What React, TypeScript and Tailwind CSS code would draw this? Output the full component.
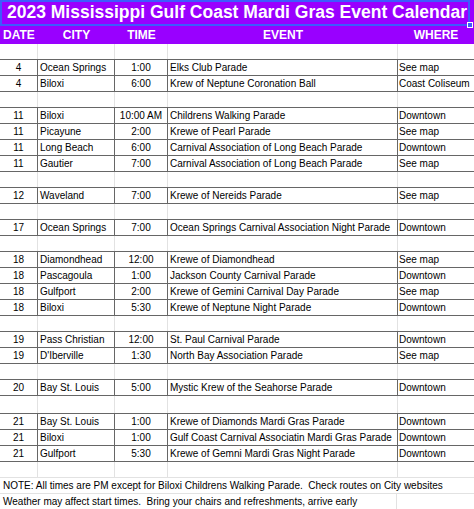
import React from "react"

type Row = [string, string, string, string, string]

const groups: Row[][] = [
  [
    ["4", "Ocean Springs", "1:00", "Elks Club Parade", "See map"],
    ["4", "Biloxi", "6:00", "Krew of Neptune Coronation Ball", "Coast Coliseum"],
  ],
  [
    ["11", "Biloxi", "10:00 AM", "Childrens Walking Parade", "Downtown"],
    ["11", "Picayune", "2:00", "Krewe of Pearl Parade", "See map"],
    ["11", "Long Beach", "6:00", "Carnival Association of Long Beach Parade", "Downtown"],
    ["11", "Gautier", "7:00", "Carnival Association of Long Beach Parade", "See map"],
  ],
  [["12", "Waveland", "7:00", "Krewe of Nereids Parade", "See map"]],
  [["17", "Ocean Springs", "7:00", "Ocean Springs Carnival Association Night Parade", "Downtown"]],
  [
    ["18", "Diamondhead", "12:00", "Krewe of Diamondhead", "See map"],
    ["18", "Pascagoula", "1:00", "Jackson County Carnival Parade", "Downtown"],
    ["18", "Gulfport", "2:00", "Krewe of Gemini Carnival Day Parade", "See map"],
    ["18", "Biloxi", "5:30", "Krewe of Neptune Night Parade", "Downtown"],
  ],
  [
    ["19", "Pass Christian", "12:00", "St. Paul Carnival Parade", "Downtown"],
    ["19", "D'Iberville", "1:30", "North Bay Association Parade", "See map"],
  ],
  [["20", "Bay St. Louis", "5:00", "Mystic Krew of the Seahorse Parade", "Downtown"]],
  [
    ["21", "Bay St. Louis", "1:00", "Krewe of Diamonds Mardi Gras Parade", "Downtown"],
    ["21", "Biloxi", "1:00", "Gulf Coast Carnival Associatin Mardi Gras Parade", "Downtown"],
    ["21", "Gulfport", "5:30", "Krewe of Gemni Mardi Gras Night Parade", "Downtown"],
  ],
]

const cols = "grid grid-cols-[38px_77px_53px_230px_1fr]"

function BlankRow({ tall = false, darkBottom = true }: { tall?: boolean; darkBottom?: boolean }) {
  return (
    <div
      className={`${cols} ${tall ? "h-[18px]" : "h-[16px]"} border-b ${
        darkBottom ? "border-[#666]" : "border-[#e2e2e2]"
      }`}
    >
      <div className="border-r border-[#e2e2e2]" />
      <div className="border-r border-[#e2e2e2]" />
      <div className="border-r border-[#e2e2e2]" />
      <div className="border-r border-[#e2e2e2]" />
      <div />
    </div>
  )
}

function DataRow({ row }: { row: Row }) {
  const [date, city, time, event, where] = row
  return (
    <div className={`${cols} h-[16px] border-b border-[#666] text-[10px] leading-none text-black`}>
      <div className="flex items-center justify-center border-r border-[#666]">{date}</div>
      <div className="flex items-center border-r border-[#666] pl-[2px] whitespace-nowrap">{city}</div>
      <div className="flex items-center justify-center border-r border-[#666] whitespace-nowrap">{time}</div>
      <div className="flex items-center border-r border-[#666] pl-[2px] whitespace-nowrap overflow-hidden">
        {event}
      </div>
      <div className="flex items-center pl-[1px] whitespace-nowrap">{where}</div>
    </div>
  )
}

export default function App() {
  return (
    <div className="w-[474px] h-[509px] overflow-hidden bg-white font-['Liberation_Sans',Arial,sans-serif]">
      {/* title cell with spreadsheet selection outline */}
      <div className="relative h-[26px] bg-[#9900ff] flex items-center justify-center">
        <span className="text-white font-bold text-[17.5px] leading-none whitespace-nowrap tracking-[0px]">
          2023 Mississippi Gulf Coast Mardi Gras Event Calendar
        </span>
        <div className="absolute left-0 top-0 w-[470px] h-[26px] border-2 border-[#3d5afe] pointer-events-none" />
        <div className="absolute left-[467px] top-[22px] w-[6px] h-[6px] bg-[#3d5afe] border border-white" />
      </div>

      {/* header */}
      <div className={`${cols} h-[18px] bg-[#9900ff] text-white font-bold text-[12px] leading-none`}>
        <div className="flex items-center pl-[3px]">DATE</div>
        <div className="flex items-center justify-center">CITY</div>
        <div className="flex items-center justify-center">TIME</div>
        <div className="flex items-center justify-center">EVENT</div>
        <div className="flex items-center justify-center">WHERE</div>
      </div>

      {groups.map((g, gi) => (
        <React.Fragment key={gi}>
          <BlankRow tall={gi === 7} />
          {g.map((r, ri) => (
            <DataRow key={ri} row={r} />
          ))}
        </React.Fragment>
      ))}

      <BlankRow darkBottom={false} />

      <div className="h-[16px] border-b border-[#e2e2e2] flex items-center pl-[3px] text-[10px] leading-none text-black whitespace-nowrap">
        NOTE: All times are PM except for Biloxi Childrens Walking Parade.&nbsp; Check routes on City websites
      </div>
      <div className="grid grid-cols-[397px_1fr] h-[16px] border-b border-[#e2e2e2] text-[10px] leading-none text-black">
        <div className="flex items-center pl-[3px] whitespace-nowrap border-r border-[#e2e2e2]">
          Weather may affect start times.&nbsp; Bring your chairs and refreshments, arrive early
        </div>
        <div />
      </div>
    </div>
  )
}
